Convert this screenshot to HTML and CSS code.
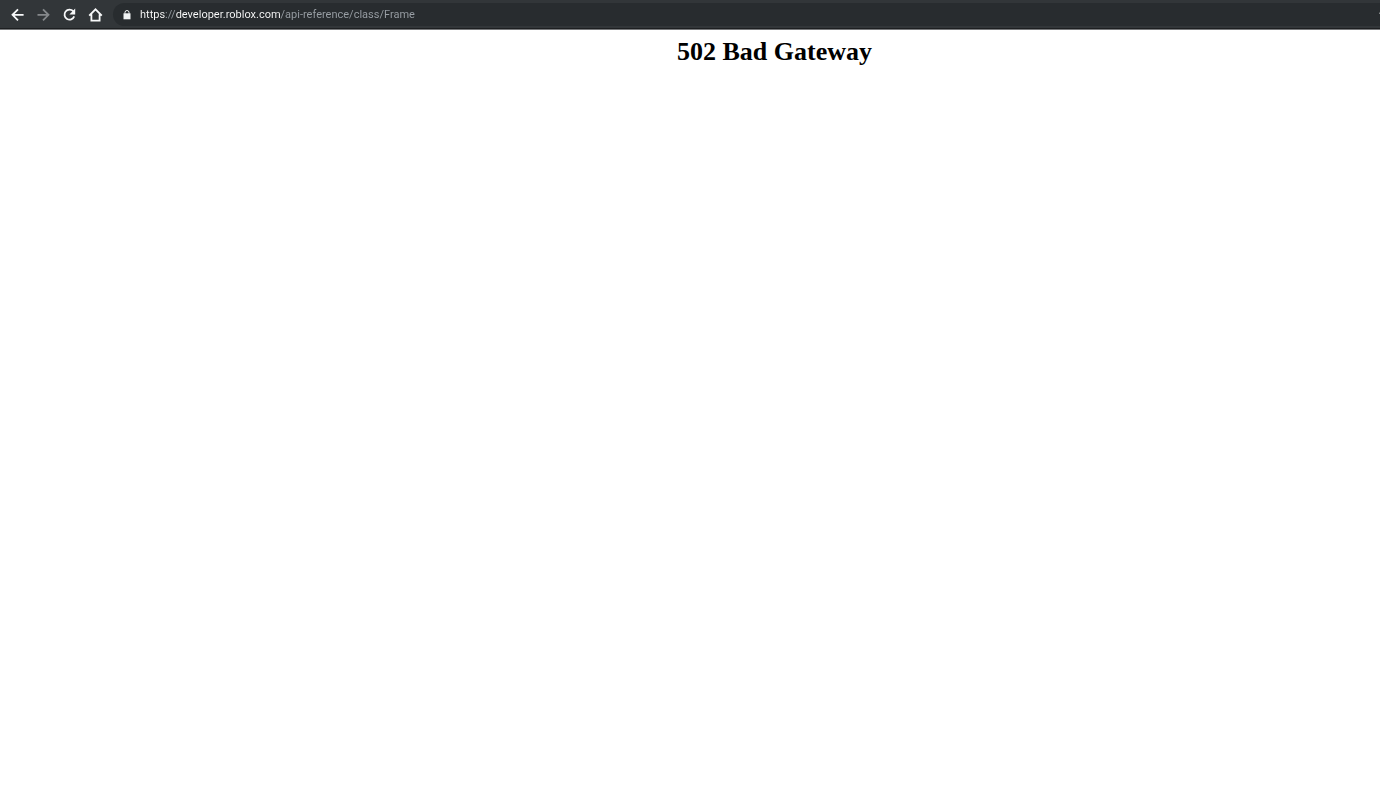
FILE: index.html
```
<!DOCTYPE html>
<html lang="en">
<head>
    <meta charset="UTF-8">
    <meta name="viewport" content="width=device-width, initial-scale=1.0">
    <title>502 Bad Gateway</title>
    <link rel="stylesheet" href="styles.css">
</head>
<body>
    <header class="toolbar">
        <nav class="nav-buttons">
            <button class="nav-btn" type="button" aria-label="Back">
                <svg viewBox="0 0 16 16"><path d="M14.6 7.8H4M9 2.3L3.5 7.8L9 13.3"/></svg>
            </button>
            <button class="nav-btn" type="button" aria-label="Forward" disabled>
                <svg viewBox="0 0 16 16"><path d="M2.5 7.8H13M8 2.3L13.5 7.8L8 13.3"/></svg>
            </button>
            <button class="nav-btn" type="button" aria-label="Reload">
                <svg viewBox="0 0 16 16"><path d="M13.2 9.4A5 5 0 1 1 12.2 4.2L13 5"/><path class="solid" d="M14.2 1.6V7.4H8.4Z"/></svg>
            </button>
            <button class="nav-btn" type="button" aria-label="Home">
                <svg viewBox="0 0 16 16"><path d="M2.2 8.6L8.5 2.3L14.8 8.6M4.4 7.2V13.7H12.6V7.2"/></svg>
            </button>
        </nav>
        <div class="address-bar">
            <svg class="lock" viewBox="0 0 8 10"><path class="solid" d="M0.5 3.3H7.5V9.3H0.5Z"/><path d="M2 3.8V2.4A2 1.9 0 0 1 6 2.4V3.8"/></svg>
            <input class="url" type="text" aria-label="Address" spellcheck="false" value="https://developer.roblox.com/api-reference/class/Frame">
            <button class="bookmark-btn" type="button" aria-label="Bookmark this page">
                <svg viewBox="0 0 16 16"><path d="M8 1L10 6L15.5 6.2L11.3 9.7L12.7 15L8 12L3.3 15L4.7 9.7L0.5 6.2L6 6Z"/></svg>
            </button>
        </div>
    </header>
    <main class="page">
        <h1 class="title">502 Bad Gateway</h1>
    </main>
</body>
</html>
```
FILE: styles.css
```
:root {
    --toolbar: #323639;
    --field: #282c2f;
    --text-bright: #ffffff;
    --text-dim: #9aa0a6;
}

* {
    margin: 0;
    padding: 0;
    box-sizing: border-box;
}

body {
    background: #ffffff;
}

.toolbar {
    display: flex;
    align-items: center;
    gap: 8px;
    padding: 3px 0 2px 7px;
    background: var(--toolbar);
    border-bottom: 1px solid #1d1f21;
    box-shadow: 0 1px 0 #77797b;
}

.nav-buttons {
    display: flex;
    gap: 6px;
}

.nav-btn {
    width: 20px;
    height: 23px;
    display: flex;
    align-items: center;
    justify-content: center;
    background: none;
    border: none;
    color: #f8f9fa;
}

.nav-btn:disabled {
    color: #85888b;
}

.nav-btn svg {
    width: 16px;
    height: 16px;
}

svg {
    flex: none;
    fill: none;
    stroke: currentColor;
    stroke-width: 1.8;
}

.solid {
    fill: currentColor;
    stroke: none;
}

.address-bar {
    flex: 1;
    display: flex;
    align-items: center;
    gap: 9px;
    height: 23px;
    padding-left: 10px;
    background: var(--field);
    border-radius: 12px 0 0 12px;
    color: #f1f3f4;
}

.lock {
    width: 8px;
    height: 10px;
    stroke-width: 1;
}

/* scheme and host are bright, the separators and the path are dim */
.url {
    flex: 1;
    min-width: 0;
    height: 21px;
    border: none;
    outline: none;
    color: var(--text-bright);
    font-family: Roboto, "Open Sans", sans-serif;
    font-size: 11px;
    background: linear-gradient(90deg,
        var(--text-bright) 25px,
        var(--text-dim) 25px 36px,
        var(--text-bright) 36px 141px,
        var(--text-dim) 141px);
    -webkit-background-clip: text;
    background-clip: text;
    -webkit-text-fill-color: transparent;
}

/* only the tip of the star fits at the window edge */
.bookmark-btn {
    width: 1px;
    height: 16px;
    display: flex;
    overflow: hidden;
    background: none;
    border: none;
    color: #c4c7c9;
}

.bookmark-btn svg {
    width: 16px;
    height: 16px;
    stroke-width: 1;
}

/* the document is centered in a view wider than the window */
.page {
    padding: 9px 0 8px 169px;
}

.title {
    font-family: "Liberation Serif", "Times New Roman", serif;
    font-size: 26px;
    line-height: 28px;
    text-align: center;
    color: #000000;
}
```
